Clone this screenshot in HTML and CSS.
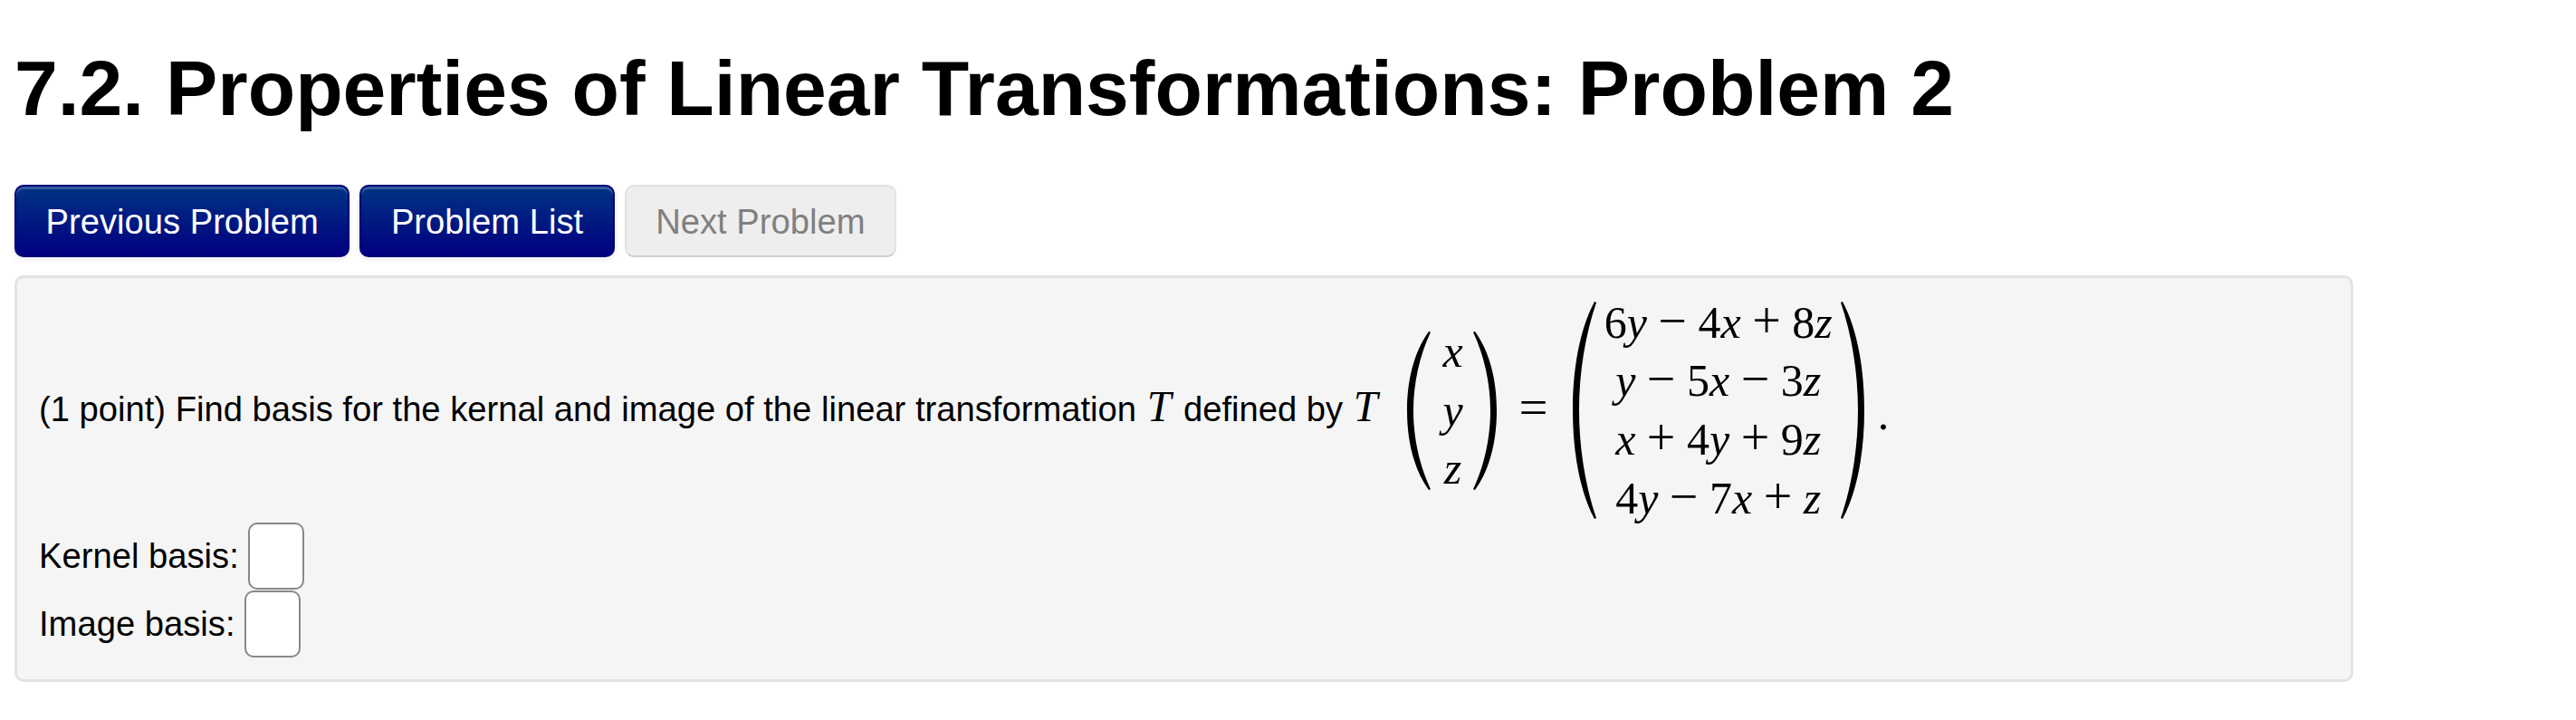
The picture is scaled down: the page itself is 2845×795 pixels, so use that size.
FILE: index.html
```html
<!DOCTYPE html>
<html lang="en">
<head>
    <meta charset="UTF-8">
    <title>7.2. Properties of Linear Transformations: Problem 2</title>
    <link rel="stylesheet" href="styles.css">
</head>
<body>
    <h1>7.2. Properties of Linear Transformations: Problem 2</h1>

    <nav class="problem-nav">
        <a class="btn" href="#">Previous Problem</a>
        <a class="btn" href="#">Problem List</a>
        <a class="btn btn-disabled" href="#">Next Problem</a>
    </nav>

    <form class="well">
        <div class="statement">
            <span class="lead">(1 point) Find basis for the kernal and image of the linear transformation <i class="math-t">T</i> defined by <i class="math-t">T</i></span>
            <div class="equation">
                <svg class="paren paren-small" viewBox="0 0 26 240" preserveAspectRatio="none"><path d="M24 0C7 32 0 76 0 120C0 164 7 208 24 240L26 239C14 204 7 162 7 120C7 78 14 36 26 1Z"/></svg>
                <div class="matrix matrix-small">
                    <div><i>x</i></div>
                    <div><i>y</i></div>
                    <div><i>z</i></div>
                </div>
                <svg class="paren paren-small flip" viewBox="0 0 26 240" preserveAspectRatio="none"><path d="M24 0C7 32 0 76 0 120C0 164 7 208 24 240L26 239C14 204 7 162 7 120C7 78 14 36 26 1Z"/></svg>
                <span class="equals">=</span>
                <svg class="paren paren-large" viewBox="0 0 26 240" preserveAspectRatio="none"><path d="M24 0C7 32 0 76 0 120C0 164 7 208 24 240L26 239C14 204 7 162 7 120C7 78 14 36 26 1Z"/></svg>
                <div class="matrix matrix-large">
                    <div>6<i>y</i><span class="op">−</span>4<i>x</i><span class="op">+</span>8<i>z</i></div>
                    <div><i>y</i><span class="op">−</span>5<i>x</i><span class="op">−</span>3<i>z</i></div>
                    <div><i>x</i><span class="op">+</span>4<i>y</i><span class="op">+</span>9<i>z</i></div>
                    <div>4<i>y</i><span class="op">−</span>7<i>x</i><span class="op">+</span><i>z</i></div>
                </div>
                <svg class="paren paren-large flip" viewBox="0 0 26 240" preserveAspectRatio="none"><path d="M24 0C7 32 0 76 0 120C0 164 7 208 24 240L26 239C14 204 7 162 7 120C7 78 14 36 26 1Z"/></svg>
                <span class="period">.</span>
            </div>
        </div>

        <div class="answer-row">
            <label for="kernel">Kernel basis:</label>
            <input type="text" id="kernel">
        </div>
        <div class="answer-row">
            <label for="image">Image basis:</label>
            <input type="text" id="image">
        </div>
    </form>
</body>
</html>
```

FILE: styles.css
```css
body {
    margin: 0;
    padding: 0 16px;
    background-color: white;
    color: black;
    font-family: "Liberation Sans", Arial, sans-serif;
    font-size: 38.2px;
}

h1 {
    margin: 0;
    padding-top: 45px;
    font-size: 85.85px;
    line-height: 104px;
    font-weight: bold;
}

.problem-nav {
    display: flex;
    gap: 11px;
    margin-top: 55px;
}

.btn {
    display: block;
    height: 80px;
    box-sizing: border-box;
    padding: 0 32.5px;
    line-height: 77px;
    border-radius: 10px;
    color: white;
    text-decoration: none;
    background: linear-gradient(to bottom, #003385, #00007f);
    border: 2px solid #00007a;
    box-shadow: inset 0 3px 0 rgba(255, 255, 255, 0.2), 0 3px 6px rgba(0, 0, 0, 0.08);
}

.btn-disabled {
    color: #808080;
    background: #eeeeee;
    border: 2px solid #e2e2e2;
    border-bottom-color: #cccccc;
    box-shadow: none;
}

.well {
    box-sizing: border-box;
    width: 2583px;
    height: 449px;
    margin-top: 20px;
    padding: 26px 24px;
    background-color: #f5f5f5;
    border: 3px solid #e3e3e3;
    border-radius: 10px;
}

.statement {
    display: flex;
    align-items: center;
    height: 240px;
}

.lead {
    margin-top: -7px;
    white-space: pre;
}

.math-t {
    margin: 0 3px 0 1px;
    font-family: "Liberation Serif", serif;
    font-size: 48px;
    line-height: 1;
}

.equation {
    display: flex;
    align-items: center;
    margin-left: 29px;
    font-family: "Liberation Serif", serif;
    font-size: 50px;
}

.paren {
    display: block;
    width: 26px;
}

.paren-small {
    height: 175px;
}

.paren-large {
    height: 240px;
}

.flip {
    transform: scaleX(-1);
}

.matrix {
    display: grid;
    justify-items: center;
    white-space: pre;
}

.matrix-small {
    width: 44px;
    padding-left: 3px;
    grid-auto-rows: 64.6px;
    line-height: 64.6px;
}

.matrix-large {
    width: 270px;
    grid-auto-rows: 64.6px;
    line-height: 64.6px;
}

.op {
    margin: 0 12.5px;
    font-size: 56px;
    line-height: 0;
}

.equals {
    margin: -7px 27px 0 25px;
    font-size: 57px;
    line-height: 1;
}

.period {
    margin: 8px 0 0 15px;
    font-size: 50px;
}

.answer-row {
    display: flex;
    align-items: center;
    height: 75.5px;
    margin-top: 3px;
}

.answer-row + .answer-row {
    margin-top: 0;
}

.answer-row input {
    box-sizing: border-box;
    width: 62px;
    height: 74px;
    margin-left: 10px;
    background: white;
    border: 2.6px solid #888888;
    border-radius: 10px;
}
```
